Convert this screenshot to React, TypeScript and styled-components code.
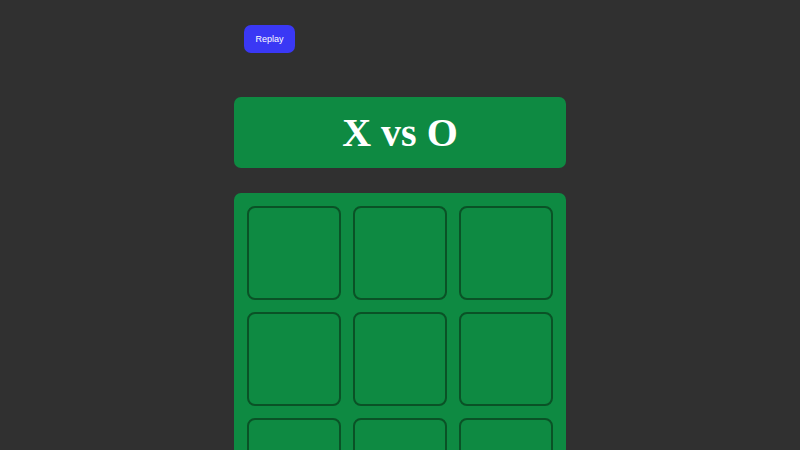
import React from "react";
import styled, { createGlobalStyle } from "styled-components";

const Global = createGlobalStyle`
  html, body { margin: 0; padding: 0; background: #303030; }
  body { font-family: "Liberation Sans", Arial, sans-serif; }
`;

const Page = styled.div`
  display: flex;
  justify-content: center;
  padding-top: 25px;
  min-height: 450px;
  box-sizing: border-box;
`;

const Column = styled.div`
  width: 332px;
  display: flex;
  flex-direction: column;
`;

const ReplayButton = styled.button`
  align-self: flex-start;
  margin-left: 10px;
  height: 28px;
  width: 51px;
  padding: 0;
  border: none;
  border-radius: 7px;
  background: #3a38f5;
  color: #ffffff;
  font-family: "Liberation Sans", Arial, sans-serif;
  font-size: 9px;
  cursor: pointer;
`;

const TitleCard = styled.div`
  margin-top: 44px;
  height: 71px;
  border-radius: 7px;
  background: #0e8a42;
  display: flex;
  align-items: center;
  justify-content: center;
`;

const Title = styled.h1`
  margin: 0;
  color: #ffffff;
  font-family: "Liberation Serif", "Times New Roman", serif;
  font-weight: bold;
  font-size: 40px;
  line-height: 1;
`;

const Board = styled.div`
  margin-top: 25px;
  padding: 13px;
  border-radius: 7px;
  background: #0e8a42;
  display: grid;
  grid-template-columns: repeat(3, 94px);
  grid-auto-rows: 94px;
  gap: 12px;
`;

const Cell = styled.button`
  box-sizing: border-box;
  width: 94px;
  height: 94px;
  border: 2px solid #0a5226;
  border-radius: 8px;
  background: #0e8a42;
  padding: 0;
  cursor: pointer;
`;

export default function App() {
  const cells = Array.from({ length: 9 }, (_, i) => i);
  return (
    <>
      <Global />
      <Page>
        <Column>
          <ReplayButton>Replay</ReplayButton>
          <TitleCard>
            <Title>X vs O</Title>
          </TitleCard>
          <Board>
            {cells.map((i) => (
              <Cell key={i} aria-label={`cell ${i + 1}`} />
            ))}
          </Board>
        </Column>
      </Page>
    </>
  );
}
